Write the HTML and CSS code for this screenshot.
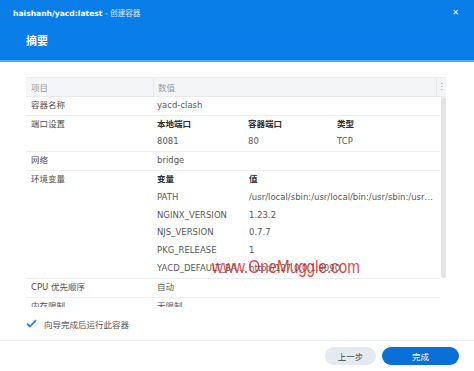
FILE: index.html
```html
<!DOCTYPE html>
<html lang="zh-CN">

<head>
    <meta charset="UTF-8">
    <meta name="viewport" content="width=device-width, initial-scale=1.0">
    <title>创建容器</title>
    <link rel="stylesheet" href="styles.css">
</head>

<body>
    <div class="dialog">
        <div class="header">
            <div class="title-bar">
                <span class="title"><b>haishanh/yacd:latest</b> - 创建容器</span>
                <span class="close">&#x2715;</span>
            </div>
            <h1>摘要</h1>
        </div>

        <div class="body">
            <div class="table">
                <div class="thead">
                    <div class="c1">项目</div>
                    <div class="c2">数值</div>
                    <div class="menu">&#x22EE;</div>
                </div>
                <div class="tbody">
                    <div class="rows">
                        <div class="row">
                            <div class="c1">容器名称</div>
                            <div class="c2"><div class="line">yacd-clash</div></div>
                        </div>
                        <div class="row">
                            <div class="c1">端口设置</div>
                            <div class="c2">
                                <div class="line port strong"><span>本地端口</span><span>容器端口</span><span>类型</span></div>
                                <div class="line port"><span>8081</span><span>80</span><span>TCP</span></div>
                            </div>
                        </div>
                        <div class="row">
                            <div class="c1">网络</div>
                            <div class="c2"><div class="line">bridge</div></div>
                        </div>
                        <div class="row">
                            <div class="c1">环境变量</div>
                            <div class="c2">
                                <div class="line env strong"><span>变量</span><span>值</span></div>
                                <div class="line env"><span>PATH</span><span>/usr/local/sbin:/usr/local/bin:/usr/sbin:/usr/bin:/sbin:/bin</span></div>
                                <div class="line env"><span>NGINX_VERSION</span><span>1.23.2</span></div>
                                <div class="line env"><span>NJS_VERSION</span><span>0.7.7</span></div>
                                <div class="line env"><span>PKG_RELEASE</span><span>1</span></div>
                                <div class="line env"><span>YACD_DEFAULT_BACKEND</span><span>http://127.0.0.1:9090</span></div>
                            </div>
                        </div>
                        <div class="row">
                            <div class="c1">CPU 优先顺序</div>
                            <div class="c2"><div class="line">自动</div></div>
                        </div>
                        <div class="row">
                            <div class="c1">内存限制</div>
                            <div class="c2"><div class="line">无限制</div></div>
                        </div>
                    </div>
                    <div class="scrollbar"><div class="thumb"></div></div>
                </div>
            </div>

            <label class="check">
                <svg width="11" height="9" viewBox="0 0 11 9"><path d="M1 4.6 L4 7.5 L10 1.2" fill="none" stroke="#2b7fd8" stroke-width="1.8"/></svg>
                <span>向导完成后运行此容器</span>
            </label>
        </div>

        <div class="footer">
            <button class="btn-back">上一步</button>
            <button class="btn-done">完成</button>
        </div>

        <div class="watermark">www.OneMuggle.com</div>
    </div>
</body>

</html>
```

FILE: styles.css
```css
body {
    margin: 0;
    background: #ffffff;
    font-family: 'DejaVu Sans', 'Noto Sans CJK SC', sans-serif;
    font-size: 8.5px;
    color: #4a4a4a;
}

.dialog {
    position: relative;
    width: 474px;
    height: 371px;
    overflow: hidden;
    background: #ffffff;
}

.header {
    height: 60px;
    background: #0a7ee8;
    border-bottom: 2px solid #58aaf0;
    color: #ffffff;
    padding: 0 13px;
}

.title-bar {
    display: flex;
    justify-content: space-between;
    align-items: center;
    height: 25px;
}

.title {
    font-size: 7.6px;
    color: #dcecfb;
}

.title b {
    color: #ffffff;
}

.close {
    font-size: 8px;
    font-weight: bold;
    margin-right: 2px;
}

.header h1 {
    margin: 7px 0 0 13px;
    font-size: 11px;
    font-weight: bold;
}

.body {
    padding: 15px 28px 0 26px;
}

.table {
    width: 420px;
    height: 230px;
    overflow: hidden;
}

.thead {
    display: flex;
    height: 17.8px;
    align-items: center;
    background: #f4f5f7;
    border-top: 1px solid #eceef1;
    border-bottom: 1px solid #e8eaed;
    color: #9a9a9a;
}

.c1 {
    width: 122px;
    padding-left: 5px;
    flex-shrink: 0;
}

.c2 {
    flex: 1;
    padding-left: 4px;
    min-width: 0;
}

.thead .c2 {
    border-left: 1px solid #e6e8eb;
    height: 100%;
    display: flex;
    align-items: center;
}

.menu {
    width: 9px;
    height: 100%;
    border-left: 1px solid #e6e8eb;
    display: flex;
    align-items: center;
    justify-content: center;
    color: #888;
    font-size: 8px;
}

.tbody {
    display: flex;
}

.rows {
    width: 415px;
}

.row {
    display: flex;
    border-bottom: 1px solid #eceef1;
}

.row .c1 {
    line-height: 17.8px;
    color: #4f4f4f;
}

.line {
    height: 17.8px;
    line-height: 17.8px;
    display: flex;
    color: #5a5a5a;
    white-space: nowrap;
}

.line span {
    overflow: hidden;
    text-overflow: ellipsis;
}

.strong {
    color: #2e2e2e;
    font-weight: bold;
}

.port span:nth-child(1) {
    width: 91px;
}

.port span:nth-child(2) {
    width: 89px;
}

.env span:nth-child(1) {
    width: 88px;
    margin-right: 4px;
    flex-shrink: 0;
}

.env span:nth-child(2) {
    width: 186px;
}

.scrollbar {
    width: 5px;
    margin-left: 1px;
}

.thumb {
    height: 181px;
    background: #e2e4e7;
    border-radius: 2px;
}

.check {
    display: flex;
    align-items: center;
    gap: 7px;
    height: 17px;
    margin-top: 8px;
    color: #555;
}

.footer {
    position: absolute;
    left: 0;
    right: 0;
    top: 340px;
    border-top: 1px solid #eceef1;
    display: flex;
    justify-content: flex-end;
    gap: 6px;
    padding: 6px 15px 0 0;
}

.footer button {
    height: 18px;
    border: none;
    border-radius: 9px;
    font-family: inherit;
    font-size: 8.5px;
    padding: 0;
}

.btn-back {
    width: 51px;
    background: #e4eaf1;
    color: #444;
}

.btn-done {
    width: 77px;
    background: #0a6fd6;
    color: #ffffff;
}

.watermark {
    position: absolute;
    left: 212px;
    top: 256px;
    font-family: 'Liberation Sans', sans-serif;
    font-size: 19px;
    transform: scaleX(0.8);
    transform-origin: left top;
    color: rgba(222, 30, 30, 0.85);
}
```
